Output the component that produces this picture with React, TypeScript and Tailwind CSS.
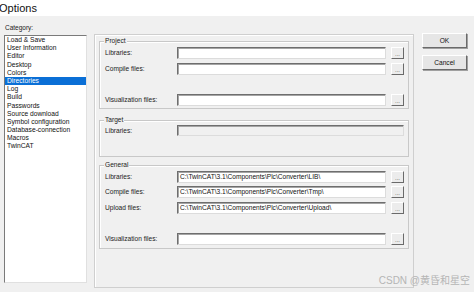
const font = { fontFamily: '"Liberation Sans", Arial, sans-serif' };

const categories = [
  "Load & Save",
  "User Information",
  "Editor",
  "Desktop",
  "Colors",
  "Directories",
  "Log",
  "Build",
  "Passwords",
  "Source download",
  "Symbol configuration",
  "Database-connection",
  "Macros",
  "TwinCAT",
];

const Field = ({ value = "", disabled = false, wide = false }: { value?: string; disabled?: boolean; wide?: boolean }) => (
  <div
    className={`flex h-full items-center overflow-hidden whitespace-nowrap border border-t-[#6e6e6e] border-l-[#6e6e6e] border-r-[#dcdcdc] border-b-[#dcdcdc] pl-[2px] text-[6.6px] text-[#111] shadow-[inset_1px_1px_0_#a5a5a5] ${
      wide ? "w-[227px]" : "w-[209px]"
    } ${disabled ? "bg-[#f0f0f0]" : "bg-white"}`}
  >
    {value}
  </div>
);

const Browse = () => (
  <div className="ml-[5px] flex h-full w-[13px] items-end justify-center border border-t-white border-l-white border-r-[#6a6a6a] border-b-[#6a6a6a] bg-[#ececec] pb-[1px] text-[6px] leading-[6px] text-[#444]">
    ...
  </div>
);

const Row = ({ label, value, mt, h = "h-[12px]", disabled = false }: { label: string; value?: string; mt: string; h?: string; disabled?: boolean }) => (
  <div className={`flex ${h} ${mt} items-center`}>
    <span className="w-[72px] text-[6.6px] text-[#222]">{label}</span>
    {disabled ? (
      <Field disabled wide />
    ) : (
      <>
        <Field value={value} />
        <Browse />
      </>
    )}
  </div>
);

const Group = ({ title, h, mt, children }: { title: string; h: string; mt: string; children: React.ReactNode }) => (
  <div className={`relative ${h} ${mt} w-[310px] border border-[#c8c8c8] pl-[5px] shadow-[inset_1px_1px_0_#fff]`}>
    <span className="absolute left-[4px] top-[-5px] bg-[#f0f0f0] px-[1px] text-[6.6px] leading-[8px] text-[#222]">
      {title}
    </span>
    {children}
  </div>
);

const Button = ({ label, mt }: { label: string; mt: string }) => (
  <div className={`flex h-[15px] w-[45px] ${mt} items-center justify-center border border-t-white border-l-white border-r-[#6a6a6a] border-b-[#6a6a6a] bg-[#e6e6e6] text-[6.6px] text-[#111] shadow-[1px_1px_0_#a0a0a0]`}>
    {label}
  </div>
);

export default function App() {
  const base = "C:\\TwinCAT\\3.1\\Components\\Plc\\Converter\\";
  return (
    <div className="relative h-[292px] w-[474px] overflow-hidden bg-[#f0f0f0]" style={font}>
      <div className="-ml-[1px] flex h-[16px] items-center bg-white text-[11px] text-[#111]">Options</div>
      <div className="flex items-start">
        <div className="ml-[4px] w-[83px]">
          <div className="mt-[8px] h-[8px] pl-[1px] text-[6.5px] leading-[8px] text-[#222]">Category:</div>
          <div className="mt-[3px] h-[248px] border border-t-[#7a7a7a] border-l-[#7a7a7a] border-r-[#e0e0e0] border-b-[#e0e0e0] bg-white">
            {categories.map((c) => (
              <div
                key={c}
                className={`h-[8.2px] pl-[2px] text-[6.7px] leading-[8.2px] ${
                  c === "Directories" ? "bg-[#0a6fd6] text-white" : "text-[#111]"
                }`}
              >
                {c}
              </div>
            ))}
          </div>
        </div>

        <div className="ml-[7px] mt-[18px] h-[254px] w-[320px] border border-[#cfcfcf] pl-[4px] pt-[6px] shadow-[inset_1px_1px_0_#fff]">
          <Group title="Project" h="h-[68px]" mt="mt-0">
            <Row label="Libraries:" mt="mt-[5px]" />
            <Row label="Compile files:" mt="mt-[4px]" />
            <Row label="Visualization files:" mt="mt-[19px]" />
          </Group>
          <Group title="Target" h="h-[37px]" mt="mt-[11px]">
            <Row label="Libraries:" mt="mt-[4px]" h="h-[11px]" disabled />
          </Group>
          <Group title="General" h="h-[84px]" mt="mt-[8px]">
            <Row label="Libraries:" value={base + "LIB\\"} mt="mt-[5px]" />
            <Row label="Compile files:" value={base + "Tmp\\"} mt="mt-[3px]" />
            <Row label="Upload files:" value={base + "Upload\\"} mt="mt-[4px]" />
            <Row label="Visualization files:" mt="mt-[19px]" />
          </Group>
        </div>

        <div className="ml-[8px] mt-[17px] flex flex-col">
          <Button label="OK" mt="mt-0" />
          <Button label="Cancel" mt="mt-[7px]" />
        </div>
      </div>
      <div
        className="absolute bottom-[5px] right-[4px] text-[10px] leading-[12px] text-[#b5b5b5]"
        style={{ fontFamily: '"Liberation Sans", "Noto Sans CJK SC", sans-serif' }}
      >
        CSDN @黄昏和星空
      </div>
    </div>
  );
}
